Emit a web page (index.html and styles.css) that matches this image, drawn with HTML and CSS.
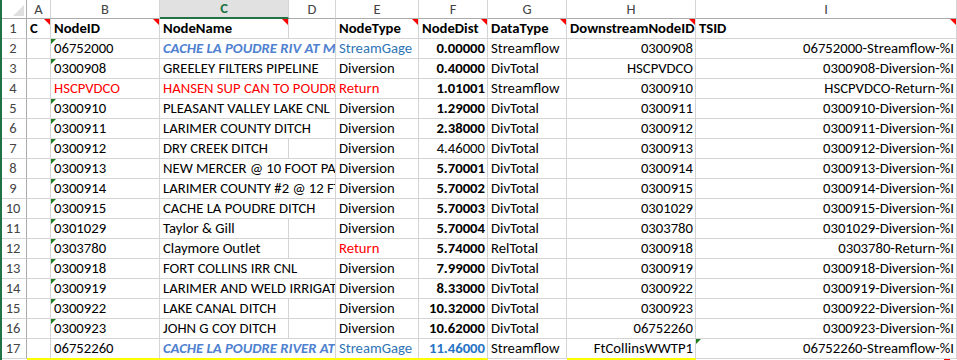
FILE: index.html
```html
<!DOCTYPE html>
<html>
<head>
<meta charset="utf-8">
<link rel="stylesheet" href="styles.css">
</head>
<body>
<div class="sheet">
  <div class="row head">
    <div class="corner"></div>
    <div class="ch">A</div><div class="ch">B</div><div class="ch sel">C</div><div class="ch">D</div><div class="ch">E</div><div class="ch">F</div><div class="ch">G</div><div class="ch">H</div><div class="ch">I</div>
  </div>
  <div class="row">
    <div class="rh">1</div>
    <div class="c b rt">C</div><div class="c b rt">NodeID</div><div class="c b rt">NodeName</div><div class="c"></div><div class="c b rt">NodeType</div><div class="c b rt">NodeDist</div><div class="c b rt">DataType</div><div class="c b rt">DownstreamNodeID</div><div class="c b rt">TSID</div>
  </div>
  <div class="row">
    <div class="rh">2</div>
    <div class="c"></div><div class="c gt">06752000</div><div class="c span bi">CACHE LA POUDRE RIV AT MOUTH OF CN</div><div class="c blue">StreamGage</div><div class="c num b">0.00000</div><div class="c">Streamflow</div><div class="c num">0300908</div><div class="c num">06752000-Streamflow-%I</div>
  </div>
  <div class="row">
    <div class="rh">3</div>
    <div class="c"></div><div class="c gt">0300908</div><div class="c span">GREELEY FILTERS PIPELINE</div><div class="c">Diversion</div><div class="c num b">0.40000</div><div class="c">DivTotal</div><div class="c num">HSCPVDCO</div><div class="c num">0300908-Diversion-%I</div>
  </div>
  <div class="row">
    <div class="rh">4</div>
    <div class="c"></div><div class="c red">HSCPVDCO</div><div class="c span red">HANSEN SUP CAN TO POUDRE</div><div class="c red">Return</div><div class="c num b">1.01001</div><div class="c">Streamflow</div><div class="c num">0300910</div><div class="c num">HSCPVDCO-Return-%I</div>
  </div>
  <div class="row">
    <div class="rh">5</div>
    <div class="c"></div><div class="c gt">0300910</div><div class="c span">PLEASANT VALLEY LAKE CNL</div><div class="c">Diversion</div><div class="c num b">1.29000</div><div class="c">DivTotal</div><div class="c num">0300911</div><div class="c num">0300910-Diversion-%I</div>
  </div>
  <div class="row">
    <div class="rh">6</div>
    <div class="c"></div><div class="c gt">0300911</div><div class="c span">LARIMER COUNTY DITCH</div><div class="c">Diversion</div><div class="c num b">2.38000</div><div class="c">DivTotal</div><div class="c num">0300912</div><div class="c num">0300911-Diversion-%I</div>
  </div>
  <div class="row">
    <div class="rh">7</div>
    <div class="c"></div><div class="c gt">0300912</div><div class="c">DRY CREEK DITCH</div><div class="c"></div><div class="c">Diversion</div><div class="c num">4.46000</div><div class="c">DivTotal</div><div class="c num">0300913</div><div class="c num">0300912-Diversion-%I</div>
  </div>
  <div class="row">
    <div class="rh">8</div>
    <div class="c"></div><div class="c gt">0300913</div><div class="c span">NEW MERCER @ 10 FOOT PARK</div><div class="c">Diversion</div><div class="c num b">5.70001</div><div class="c">DivTotal</div><div class="c num">0300914</div><div class="c num">0300913-Diversion-%I</div>
  </div>
  <div class="row">
    <div class="rh">9</div>
    <div class="c"></div><div class="c gt">0300914</div><div class="c span">LARIMER COUNTY #2 @ 12 FT</div><div class="c">Diversion</div><div class="c num b">5.70002</div><div class="c">DivTotal</div><div class="c num">0300915</div><div class="c num">0300914-Diversion-%I</div>
  </div>
  <div class="row">
    <div class="rh">10</div>
    <div class="c"></div><div class="c gt">0300915</div><div class="c span">CACHE LA POUDRE DITCH</div><div class="c">Diversion</div><div class="c num b">5.70003</div><div class="c">DivTotal</div><div class="c num">0301029</div><div class="c num">0300915-Diversion-%I</div>
  </div>
  <div class="row">
    <div class="rh">11</div>
    <div class="c"></div><div class="c gt">0301029</div><div class="c">Taylor &amp; Gill</div><div class="c"></div><div class="c">Diversion</div><div class="c num b">5.70004</div><div class="c">DivTotal</div><div class="c num">0303780</div><div class="c num">0301029-Diversion-%I</div>
  </div>
  <div class="row">
    <div class="rh">12</div>
    <div class="c"></div><div class="c gt">0303780</div><div class="c">Claymore Outlet</div><div class="c"></div><div class="c red">Return</div><div class="c num b">5.74000</div><div class="c">RelTotal</div><div class="c num">0300918</div><div class="c num">0303780-Return-%I</div>
  </div>
  <div class="row">
    <div class="rh">13</div>
    <div class="c"></div><div class="c gt">0300918</div><div class="c span">FORT COLLINS IRR CNL</div><div class="c">Diversion</div><div class="c num b">7.99000</div><div class="c">DivTotal</div><div class="c num">0300919</div><div class="c num">0300918-Diversion-%I</div>
  </div>
  <div class="row">
    <div class="rh">14</div>
    <div class="c"></div><div class="c gt">0300919</div><div class="c span">LARIMER AND WELD IRRIGATION</div><div class="c">Diversion</div><div class="c num b">8.33000</div><div class="c">DivTotal</div><div class="c num">0300922</div><div class="c num">0300919-Diversion-%I</div>
  </div>
  <div class="row">
    <div class="rh">15</div>
    <div class="c"></div><div class="c gt">0300922</div><div class="c">LAKE CANAL DITCH</div><div class="c"></div><div class="c">Diversion</div><div class="c num b">10.32000</div><div class="c">DivTotal</div><div class="c num">0300923</div><div class="c num">0300922-Diversion-%I</div>
  </div>
  <div class="row">
    <div class="rh">16</div>
    <div class="c"></div><div class="c gt">0300923</div><div class="c">JOHN G COY DITCH</div><div class="c"></div><div class="c">Diversion</div><div class="c num b">10.62000</div><div class="c">DivTotal</div><div class="c num">06752260</div><div class="c num">0300923-Diversion-%I</div>
  </div>
  <div class="row">
    <div class="rh">17</div>
    <div class="c hl"></div><div class="c hl">06752260</div><div class="c span hl bi">CACHE LA POUDRE RIVER AT FORT COLLINS</div><div class="c hl blue">StreamGage</div><div class="c hl num b blue2">11.46000</div><div class="c">Streamflow</div><div class="c hl num">FtCollinsWWTP1</div><div class="c num gt">06752260-Streamflow-%I</div>
  </div>
  <div class="row tail">
    <div class="rh"></div>
    <div class="y"></div><div class="y"></div><div class="y"></div><div class="y"></div><div class="y"></div><div class="y"></div><div></div><div class="y"></div><div class="redmark"></div>
  </div>
</div>
</body>
</html>
```

FILE: styles.css
```css
html, body {
  margin: 0;
  padding: 0;
  background: #ffffff;
  overflow: hidden;
}
body {
  width: 957px;
  height: 360px;
  font-family: "Carlito", "Lato", "Liberation Sans", sans-serif;
  font-size: 14.7px;
  color: #000;
}
.sheet {
  position: relative;
  height: 360px;
  overflow: hidden;
}
.sheet::before {
  content: "";
  position: absolute;
  left: 0;
  top: 0;
  bottom: 0;
  width: 2px;
  background: #217346;
  z-index: 3;
}
.row {
  display: grid;
  grid-template-columns: 27px 24px 109px 129px 47px 83px 69px 79px 129px 261px;
  height: 20px;
}
.row.head {
  height: 19px;
}
.row.tail {
  height: 1px;
}
.row > div {
  box-sizing: border-box;
  border-right: 1px solid #d4d4d4;
  border-bottom: 1px solid #d4d4d4;
  white-space: nowrap;
  overflow: hidden;
  line-height: 19px;
  position: relative;
}
.row.tail > div {
  border: 0;
}
.row.tail > .y {
  background: #ffff00;
}
.row.tail > .redmark {
  background: linear-gradient(to right, transparent 248px, #ff0000 248px, #ff0000 254px, transparent 254px);
}
.corner {
  background: #fff;
  border-right-color: #ababab !important;
  border-bottom-color: #ababab !important;
}
.corner::after {
  content: "";
  position: absolute;
  right: 2px;
  bottom: 2px;
  width: 0;
  height: 0;
  border-left: 11px solid transparent;
  border-bottom: 11px solid #dfdfdf;
}
.ch {
  text-align: center;
  color: #444;
  font-size: 14.5px;
  line-height: 18px !important;
  border-bottom-color: #ababab !important;
  background: #fff;
}
.ch.sel {
  background: #e1e1e1;
  color: #217346;
  font-weight: bold;
  border-bottom: 2px solid #217346 !important;
  line-height: 17px !important;
}
.rh {
  text-align: center;
  color: #444;
  font-size: 14.5px;
  border-right-color: #ababab !important;
  background: #fff;
}
.c {
  padding: 0 3px 0 3px;
}
.span {
  grid-column: span 2;
}
.num {
  text-align: right;
  padding-right: 2px;
}
.b {
  font-weight: bold;
}
.bi {
  font-weight: bold;
  font-style: italic;
  color: #4f81d0;
}
.blue {
  color: #2f75b5;
}
.blue2 {
  color: #2573c5;
}
.red {
  color: #ff0000;
}
.gt::before {
  content: "";
  position: absolute;
  left: 0;
  top: 0;
  width: 0;
  height: 0;
  border-top: 5px solid #1f7d1f;
  border-right: 5px solid transparent;
}
.rt::after {
  content: "";
  position: absolute;
  right: 0;
  top: 0;
  width: 0;
  height: 0;
  border-top: 6px solid #ff0000;
  border-left: 6px solid transparent;
}
.row > .hl {
  border-bottom: 1px solid #ffff00;
}
```
